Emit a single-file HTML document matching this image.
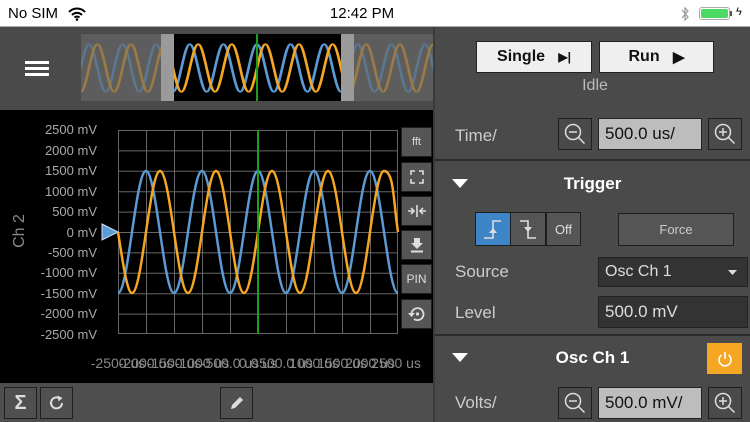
<!DOCTYPE html>
<html><head><meta charset="utf-8">
<style>
*{margin:0;padding:0;box-sizing:border-box}
body{width:750px;height:422px;overflow:hidden;background:#4a4a4a;font-family:"Liberation Sans",sans-serif;position:relative}
.a{position:absolute}
.btn{position:absolute;background:#555;border:1px solid #1e1e1e;color:#ddd;display:flex;align-items:center;justify-content:center}
.lbl{position:absolute;color:#ccc;font-size:17px}
.yl{position:absolute;right:653px;color:#aaa;font-size:13px;text-align:right;white-space:nowrap}
.xl{position:absolute;top:355px;color:#8a8a8a;font-size:14px;white-space:nowrap;transform:translateX(-50%)}
.field{position:absolute;background:#bdbdbd;border:1px solid #222;color:#111;font-size:17px;padding-left:6px;display:flex;align-items:center}
.dark{position:absolute;background:#333;border:1px solid #222;color:#ddd;font-size:17px;padding-left:6px;display:flex;align-items:center}
</style></head><body>
<div class="a" style="left:0;top:0;width:750px;height:27px;background:#fff;border-bottom:1px solid #aaa"></div>
<div class="a" style="left:8px;top:5px;font-size:15px;color:#000">No SIM</div>
<svg class="a" style="left:68px;top:7px" width="18" height="14" viewBox="0 0 18 14"><path d="M1 5a11 11 0 0 1 16 0M4 8a7 7 0 0 1 10 0M6.5 10.5a3.5 3.5 0 0 1 5 0" stroke="#000" stroke-width="2" fill="none"/><circle cx="9" cy="12.5" r="1.3"/></svg>
<div class="a" style="left:312px;top:5px;font-size:15px;color:#000;width:100px;text-align:center">12:42 PM</div>
<svg class="a" style="left:680px;top:6px" width="10" height="16" viewBox="0 0 10 16"><path d="M2 4l6 7-3 3V2l3 3-6 7" stroke="#999" stroke-width="1.2" fill="none"/></svg>
<div class="a" style="left:699px;top:7px;width:31px;height:13px;border:1px solid #aaa;border-radius:3px;padding:1px"><div style="width:100%;height:100%;background:#4cd964;border-radius:2px"></div></div>
<div class="a" style="left:730px;top:11px;width:2px;height:5px;background:#555"></div>
<div class="a" style="left:736px;top:6px;font-size:11px;color:#000">ϟ</div>

<div class="a" style="left:25px;top:61px;width:24px;height:3px;background:#fff"></div>
<div class="a" style="left:25px;top:67px;width:24px;height:3px;background:#fff"></div>
<div class="a" style="left:25px;top:73px;width:24px;height:3px;background:#fff"></div>

<svg class="a" style="left:0;top:0" width="440" height="110">
<defs><clipPath id="oc"><rect x="81" y="34" width="353" height="67"/></clipPath></defs>
<rect x="81" y="34" width="353" height="67" fill="#5c5c5c"/>
<rect x="174" y="34" width="167" height="67" fill="#000"/>
<g clip-path="url(#oc)">
<g transform="translate(102.2,68) scale(0.6,0.39) translate(0,-232)" fill="none" stroke-width="4.5">
<path stroke="#5b9bd5" d="M-162,293 c10.2,0 17.8,-122 28,-122 s17.8,122 28,122 c10.2,0 17.8,-122 28,-122 s17.8,122 28,122 c10.2,0 17.8,-122 28,-122 s17.8,122 28,122 c10.2,0 17.8,-122 28,-122 s17.8,122 28,122 c10.2,0 17.8,-122 28,-122 s17.8,122 28,122 c10.2,0 17.8,-122 28,-122 s17.8,122 28,122 c10.2,0 17.8,-122 28,-122 s17.8,122 28,122 c10.2,0 17.8,-122 28,-122 s17.8,122 28,122 c10.2,0 17.8,-122 28,-122 s17.8,122 28,122 c10.2,0 17.8,-122 28,-122 s17.8,122 28,122 c10.2,0 17.8,-122 28,-122 s17.8,122 28,122 c10.2,0 17.8,-122 28,-122 s17.8,122 28,122 c10.2,0 17.8,-122 28,-122 s17.8,122 28,122 c10.2,0 17.8,-122 28,-122 s17.8,122 28,122 c10.2,0 17.8,-122 28,-122 s17.8,122 28,122"/>
<path stroke="#f5a623" d="M-148,293 c10.2,0 17.8,-122 28,-122 s17.8,122 28,122 c10.2,0 17.8,-122 28,-122 s17.8,122 28,122 c10.2,0 17.8,-122 28,-122 s17.8,122 28,122 c10.2,0 17.8,-122 28,-122 s17.8,122 28,122 c10.2,0 17.8,-122 28,-122 s17.8,122 28,122 c10.2,0 17.8,-122 28,-122 s17.8,122 28,122 c10.2,0 17.8,-122 28,-122 s17.8,122 28,122 c10.2,0 17.8,-122 28,-122 s17.8,122 28,122 c10.2,0 17.8,-122 28,-122 s17.8,122 28,122 c10.2,0 17.8,-122 28,-122 s17.8,122 28,122 c10.2,0 17.8,-122 28,-122 s17.8,122 28,122 c10.2,0 17.8,-122 28,-122 s17.8,122 28,122 c10.2,0 17.8,-122 28,-122 s17.8,122 28,122 c10.2,0 17.8,-122 28,-122 s17.8,122 28,122 c10.2,0 17.8,-122 28,-122 s17.8,122 28,122"/>
</g></g>
<rect x="81" y="34" width="93" height="67" fill="#5e5e5e" opacity="0.6"/>
<rect x="341" y="34" width="93" height="67" fill="#5e5e5e" opacity="0.6"/>
<rect x="161" y="34" width="13" height="67" fill="#9a9a9a"/>
<rect x="341" y="34" width="13" height="67" fill="#9a9a9a"/>
<rect x="256" y="34" width="2" height="67" fill="#1aa01a"/>
</svg>

<div class="a" style="left:0;top:110px;width:434px;height:273px;background:#000"></div>
<div class="yl" style="top:122px">2500 mV</div>
<div class="yl" style="top:143px">2000 mV</div>
<div class="yl" style="top:163px">1500 mV</div>
<div class="yl" style="top:184px">1000 mV</div>
<div class="yl" style="top:204px">500 mV</div>
<div class="yl" style="top:225px">0 mV</div>
<div class="yl" style="top:245px">-500 mV</div>
<div class="yl" style="top:265px">-1000 mV</div>
<div class="yl" style="top:286px">-1500 mV</div>
<div class="yl" style="top:306px">-2000 mV</div>
<div class="yl" style="top:327px">-2500 mV</div>
<div class="a" style="left:2px;top:222px;color:#888;font-size:16px;transform:rotate(-90deg);transform-origin:center;width:36px;text-align:center">Ch 2</div>
<svg class="a" style="left:0;top:110px" width="434" height="273">
<g transform="translate(0,-110)">
<g stroke="#666" stroke-width="1">
<path d="M118.5 130v204M146.5 130v204M174.5 130v204M202.5 130v204M230.5 130v204M286.5 130v204M314.5 130v204M342.5 130v204M370.5 130v204M397.5 130v204"/>
<path d="M118 130.5h280M118 150.9h280M118 171.3h280M118 191.7h280M118 212.1h280M118 232.5h280M118 252.9h280M118 273.3h280M118 293.7h280M118 314.1h280M118 333.5h280"/>
</g>
<path d="M102 224l16 8-16 8z" fill="#5b9bd5" stroke="#cfe0f0" stroke-width="1"/>
<g fill="none" stroke-width="2.5">
<path stroke="#5b9bd5" d="M118,293 c10.2,0 17.8,-122 28,-122 s17.8,122 28,122 c10.2,0 17.8,-122 28,-122 s17.8,122 28,122 c10.2,0 17.8,-122 28,-122 s17.8,122 28,122 c10.2,0 17.8,-122 28,-122 s17.8,122 28,122 c10.2,0 17.8,-122 28,-122 s17.8,122 28,122"/>
<path stroke="#f5a623" d="M118,232 c4.5,28 9,61 14,61 c10.2,0 17.8,-122 28,-122 s17.8,122 28,122 c10.2,0 17.8,-122 28,-122 s17.8,122 28,122 c10.2,0 17.8,-122 28,-122 s17.8,122 28,122 c10.2,0 17.8,-122 28,-122 s17.8,122 28,122 c10.2,0 17.8,-122 28,-122 s9.5,33 14,61"/>
</g>
<rect x="257" y="130" width="2" height="204" fill="#1aa01a"/>
</g></svg>
<div class="xl" style="left:118px">-2500 us</div>
<div class="xl" style="left:146px">-2000 us</div>
<div class="xl" style="left:174px">-1500 us</div>
<div class="xl" style="left:202px">-1000 us</div>
<div class="xl" style="left:230px">-500.0 us</div>
<div class="xl" style="left:258px">0.0 us</div>
<div class="xl" style="left:286px">500.0 us</div>
<div class="xl" style="left:314px">1000 us</div>
<div class="xl" style="left:342px">1500 us</div>
<div class="xl" style="left:370px">2000 us</div>
<div class="xl" style="left:396px">2500 us</div>

<div class="btn" style="left:401px;top:127px;width:31px;height:30px;font-size:11px">fft</div>
<div class="btn" style="left:401px;top:162px;width:31px;height:30px"><svg width="14" height="14"><path d="M1 5V1h4M9 1h4v4M13 9v4H9M5 13H1V9" stroke="#ddd" stroke-width="1.6" fill="none"/></svg></div>
<div class="btn" style="left:401px;top:196px;width:31px;height:30px"><svg width="20" height="14"><path d="M10 1v12M1 7h6M4 4l3 3-3 3M19 7h-6M16 4l-3 3 3 3" stroke="#ddd" stroke-width="1.6" fill="none"/></svg></div>
<div class="btn" style="left:401px;top:230px;width:31px;height:30px"><svg width="14" height="16"><path d="M4 1h6v5h3l-6 6-6-6h3z" fill="#ddd"/><rect x="1" y="13.5" width="12" height="2" fill="#ddd"/></svg></div>
<div class="btn" style="left:401px;top:264px;width:31px;height:30px;font-size:12px">PIN</div>
<div class="btn" style="left:401px;top:299px;width:31px;height:30px"><svg width="18" height="18"><path d="M3.5 9A6 6 0 1 1 6 14" stroke="#ddd" stroke-width="1.8" fill="none"/><path d="M0 8h7l-3.5 4z" fill="#ddd"/><circle cx="9.5" cy="9" r="1.6" fill="#ddd"/></svg></div>

<div class="a" style="left:0;top:383px;width:434px;height:39px;background:#4e4e4e"></div>
<div class="btn" style="left:4px;top:387px;width:33px;height:32px;font-size:20px;font-weight:bold;background:#505050">Σ</div>
<div class="btn" style="left:40px;top:387px;width:33px;height:32px;background:#505050"><svg width="16" height="16"><path d="M13 8A5.5 5.5 0 1 1 10.5 3.3" stroke="#ddd" stroke-width="2" fill="none"/><path d="M8.5 0.5l5 2.5-4 3.5z" fill="#ddd"/></svg></div>
<div class="btn" style="left:220px;top:387px;width:33px;height:32px;background:#505050"><svg width="16" height="16"><path d="M2 14l1-4 8-8 3 3-8 8z" fill="#ddd"/></svg></div>

<div class="a" style="left:433px;top:27px;width:2px;height:395px;background:#3a3a3a"></div>

<div class="btn" style="left:476px;top:41px;width:116px;height:32px;background:#efefef;border-color:#222;color:#111;font-weight:bold;font-size:16px">Single&nbsp;&nbsp;&nbsp;<span style="font-size:12px">▶|</span></div>
<div class="btn" style="left:599px;top:41px;width:115px;height:32px;background:#efefef;border-color:#222;color:#111;font-weight:bold;font-size:16px">Run&nbsp;&nbsp;&nbsp;<span style="font-size:15px">▶</span></div>
<div class="a" style="left:565px;top:77px;width:60px;text-align:center;color:#bbb;font-size:16px">Idle</div>

<div class="lbl" style="left:455px;top:126px">Time/</div>
<div class="btn" style="left:558px;top:118px;width:34px;height:32px;background:#4a4a4a"><svg width="22" height="22"><circle cx="9" cy="9" r="7.5" stroke="#ddd" stroke-width="1.5" fill="none"/><path d="M5 9h8M14.5 14.5l6 6" stroke="#ddd" stroke-width="1.5"/></svg></div>
<div class="field" style="left:598px;top:118px;width:104px;height:32px">500.0 us/</div>
<div class="btn" style="left:708px;top:118px;width:34px;height:32px;background:#4a4a4a"><svg width="22" height="22"><circle cx="9" cy="9" r="7.5" stroke="#ddd" stroke-width="1.5" fill="none"/><path d="M5 9h8M9 5v8M14.5 14.5l6 6" stroke="#ddd" stroke-width="1.5"/></svg></div>
<div class="a" style="left:435px;top:159px;width:315px;height:2px;background:#2a2a2a"></div>

<svg class="a" style="left:452px;top:179px" width="16" height="10"><path d="M0 0h16l-8 9z" fill="#fff"/></svg>
<div class="a" style="left:540px;top:174px;width:105px;text-align:center;color:#fff;font-weight:bold;font-size:17px">Trigger</div>
<div class="btn" style="left:475px;top:212px;width:36px;height:34px;background:#3d85c6"><svg width="20" height="22"><path d="M1 20h9V3h8" stroke="#ddd" stroke-width="1.6" fill="none"/><path d="M6 15l4-5 4 5z" fill="#ddd"/></svg></div>
<div class="btn" style="left:510px;top:212px;width:36px;height:34px"><svg width="20" height="22"><path d="M2 3h8v17h8" stroke="#ddd" stroke-width="1.6" fill="none"/><path d="M6 9l4 5 4-5z" fill="#ddd"/></svg></div>
<div class="btn" style="left:546px;top:212px;width:35px;height:34px;font-size:13px">Off</div>
<div class="btn" style="left:618px;top:213px;width:116px;height:33px;font-size:13px;color:#ccc">Force</div>
<div class="lbl" style="left:455px;top:262px">Source</div>
<div class="dark" style="left:598px;top:257px;width:150px;height:30px;font-size:16px">Osc Ch 1<svg style="position:absolute;right:10px;top:12px" width="9" height="5"><path d="M0 0h9l-4.5 5z" fill="#ddd"/></svg></div>
<div class="lbl" style="left:455px;top:303px">Level</div>
<div class="dark" style="left:598px;top:296px;width:150px;height:32px">500.0 mV</div>
<div class="a" style="left:435px;top:334px;width:315px;height:2px;background:#2a2a2a"></div>

<svg class="a" style="left:452px;top:353px" width="16" height="10"><path d="M0 0h16l-8 9z" fill="#fff"/></svg>
<div class="a" style="left:540px;top:348px;width:105px;text-align:center;color:#fff;font-weight:bold;font-size:17px">Osc Ch 1</div>
<div class="a" style="left:707px;top:343px;width:35px;height:31px;background:#f5a623;display:flex;align-items:center;justify-content:center"><svg width="16" height="16"><path d="M4.5 4a6 6 0 1 0 7 0" stroke="#fff" stroke-width="1.6" fill="none"/><path d="M8 1v7" stroke="#fff" stroke-width="1.6"/></svg></div>
<div class="lbl" style="left:455px;top:393px">Volts/</div>
<div class="btn" style="left:558px;top:387px;width:34px;height:32px;background:#4a4a4a"><svg width="22" height="22"><circle cx="9" cy="9" r="7.5" stroke="#ddd" stroke-width="1.5" fill="none"/><path d="M5 9h8M14.5 14.5l6 6" stroke="#ddd" stroke-width="1.5"/></svg></div>
<div class="field" style="left:598px;top:387px;width:104px;height:32px">500.0 mV/</div>
<div class="btn" style="left:708px;top:387px;width:34px;height:32px;background:#4a4a4a"><svg width="22" height="22"><circle cx="9" cy="9" r="7.5" stroke="#ddd" stroke-width="1.5" fill="none"/><path d="M5 9h8M9 5v8M14.5 14.5l6 6" stroke="#ddd" stroke-width="1.5"/></svg></div>
</body></html>
